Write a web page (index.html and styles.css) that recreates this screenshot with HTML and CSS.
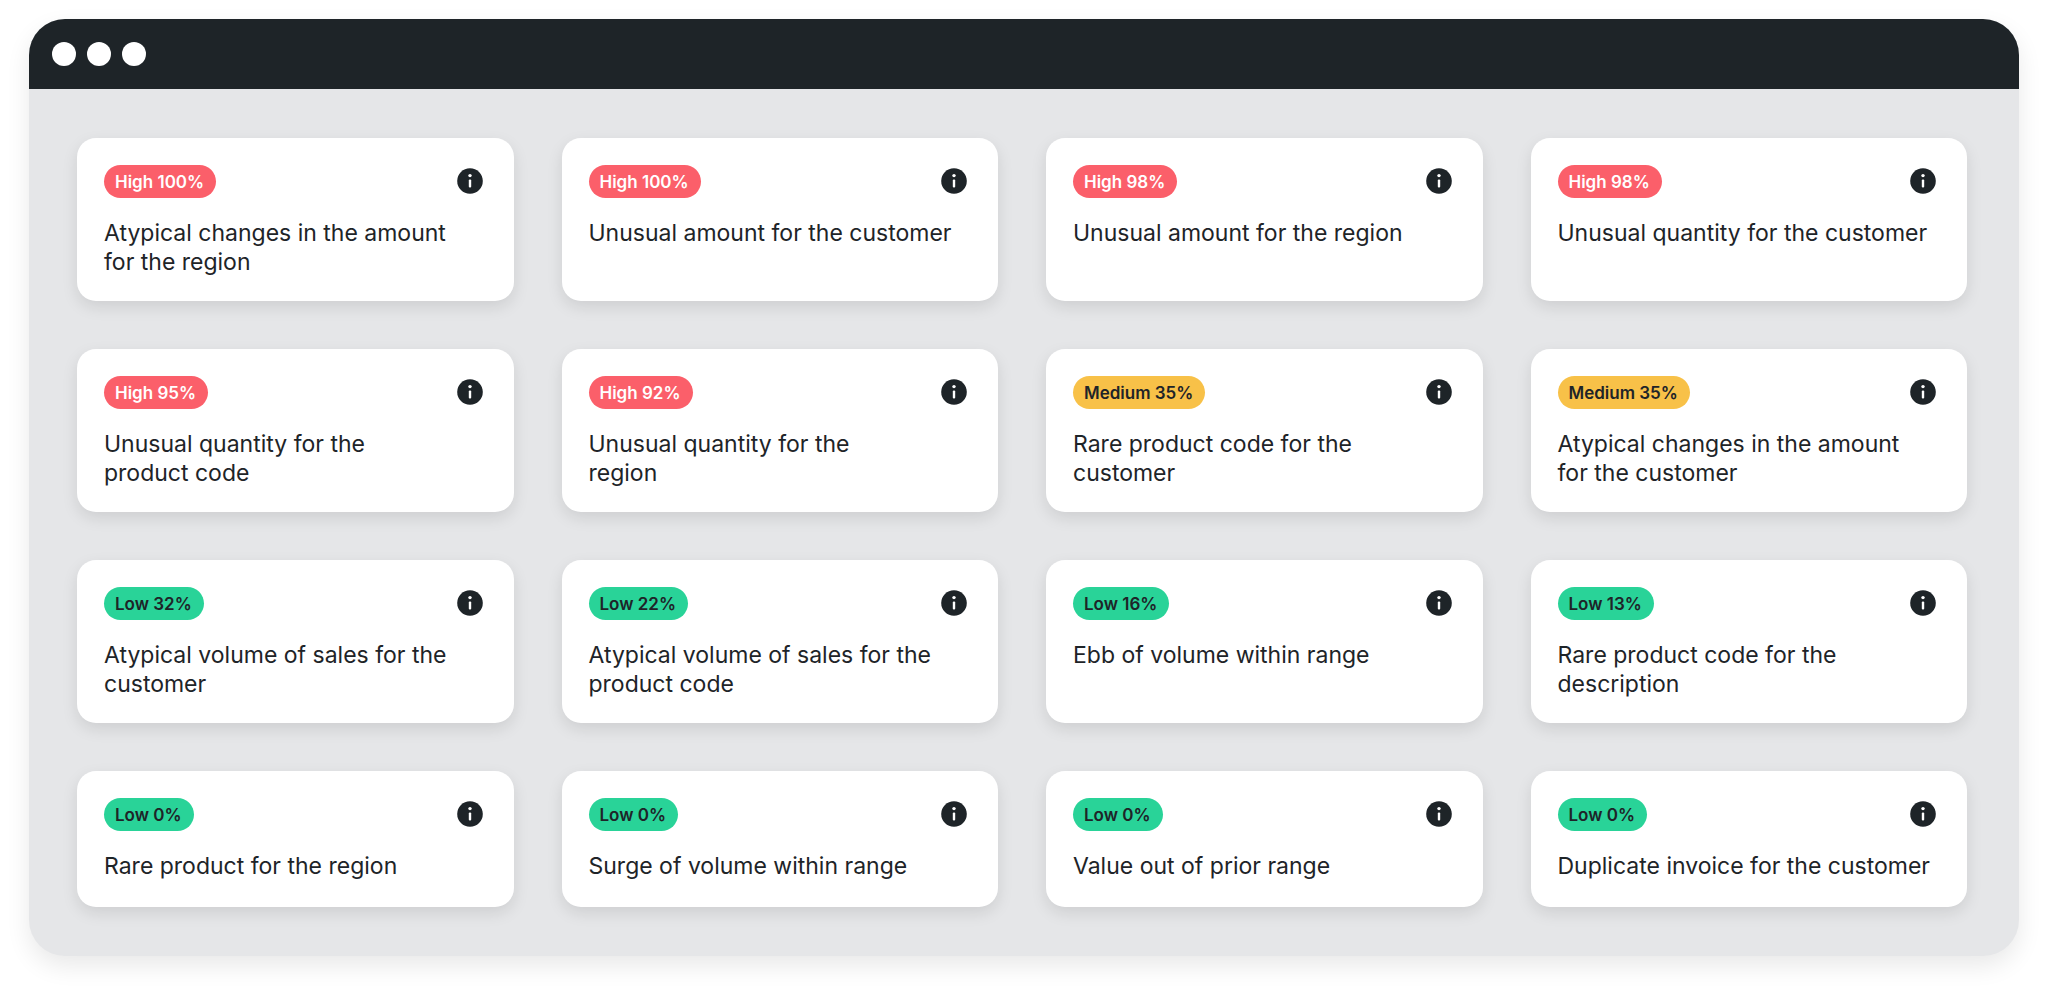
FILE: index.html
```
<!DOCTYPE html>
<html lang="en">
<head>
    <meta charset="UTF-8">
    <meta name="viewport" content="width=device-width, initial-scale=1.0">
    <title>Risk Factors</title>
    <link rel="stylesheet" href="styles.css">
</head>
<body>
    <!-- shared info icon -->
    <svg class="sprite" aria-hidden="true">
        <symbol id="info" viewBox="0 0 26 26">
            <circle cx="13" cy="13" r="12.8" fill="#1e2428" />
            <circle cx="13" cy="7.6" r="1.7" fill="#fff" />
            <rect x="11.8" y="11.6" width="2.4" height="8" rx="1" fill="#fff" />
        </symbol>
    </svg>

    <div class="window">
        <header class="title-bar">
            <span class="dot"></span>
            <span class="dot"></span>
            <span class="dot"></span>
        </header>

        <main class="cards">
            <article class="card">
                <div class="card-top">
                    <span class="badge high">High 100%</span>
                    <button class="info" aria-label="More info"><svg><use href="#info" /></svg></button>
                </div>
                <p>Atypical changes in the amount<br>for the region</p>
            </article>
            <article class="card">
                <div class="card-top">
                    <span class="badge high">High 100%</span>
                    <button class="info" aria-label="More info"><svg><use href="#info" /></svg></button>
                </div>
                <p>Unusual amount for the customer</p>
            </article>
            <article class="card">
                <div class="card-top">
                    <span class="badge high">High 98%</span>
                    <button class="info" aria-label="More info"><svg><use href="#info" /></svg></button>
                </div>
                <p>Unusual amount for the region</p>
            </article>
            <article class="card">
                <div class="card-top">
                    <span class="badge high">High 98%</span>
                    <button class="info" aria-label="More info"><svg><use href="#info" /></svg></button>
                </div>
                <p>Unusual quantity for the customer</p>
            </article>

            <article class="card">
                <div class="card-top">
                    <span class="badge high">High 95%</span>
                    <button class="info" aria-label="More info"><svg><use href="#info" /></svg></button>
                </div>
                <p>Unusual quantity for the<br>product code</p>
            </article>
            <article class="card">
                <div class="card-top">
                    <span class="badge high">High 92%</span>
                    <button class="info" aria-label="More info"><svg><use href="#info" /></svg></button>
                </div>
                <p>Unusual quantity for the<br>region</p>
            </article>
            <article class="card">
                <div class="card-top">
                    <span class="badge medium">Medium 35%</span>
                    <button class="info" aria-label="More info"><svg><use href="#info" /></svg></button>
                </div>
                <p>Rare product code for the<br>customer</p>
            </article>
            <article class="card">
                <div class="card-top">
                    <span class="badge medium">Medium 35%</span>
                    <button class="info" aria-label="More info"><svg><use href="#info" /></svg></button>
                </div>
                <p>Atypical changes in the amount<br>for the customer</p>
            </article>

            <article class="card">
                <div class="card-top">
                    <span class="badge low">Low 32%</span>
                    <button class="info" aria-label="More info"><svg><use href="#info" /></svg></button>
                </div>
                <p>Atypical volume of sales for the<br>customer</p>
            </article>
            <article class="card">
                <div class="card-top">
                    <span class="badge low">Low 22%</span>
                    <button class="info" aria-label="More info"><svg><use href="#info" /></svg></button>
                </div>
                <p>Atypical volume of sales for the<br>product code</p>
            </article>
            <article class="card">
                <div class="card-top">
                    <span class="badge low">Low 16%</span>
                    <button class="info" aria-label="More info"><svg><use href="#info" /></svg></button>
                </div>
                <p>Ebb of volume within range</p>
            </article>
            <article class="card">
                <div class="card-top">
                    <span class="badge low">Low 13%</span>
                    <button class="info" aria-label="More info"><svg><use href="#info" /></svg></button>
                </div>
                <p>Rare product code for the<br>description</p>
            </article>

            <article class="card">
                <div class="card-top">
                    <span class="badge low">Low 0%</span>
                    <button class="info" aria-label="More info"><svg><use href="#info" /></svg></button>
                </div>
                <p>Rare product for the region</p>
            </article>
            <article class="card">
                <div class="card-top">
                    <span class="badge low">Low 0%</span>
                    <button class="info" aria-label="More info"><svg><use href="#info" /></svg></button>
                </div>
                <p>Surge of volume within range</p>
            </article>
            <article class="card">
                <div class="card-top">
                    <span class="badge low">Low 0%</span>
                    <button class="info" aria-label="More info"><svg><use href="#info" /></svg></button>
                </div>
                <p>Value out of prior range</p>
            </article>
            <article class="card">
                <div class="card-top">
                    <span class="badge low">Low 0%</span>
                    <button class="info" aria-label="More info"><svg><use href="#info" /></svg></button>
                </div>
                <p>Duplicate invoice for the customer</p>
            </article>
        </main>
    </div>
</body>
</html>
```
FILE: styles.css
```
* {
    box-sizing: border-box;
}
body {
    margin: 0;
    padding: 19px 29px 39px;
    background-color: #fff;
    color: #1e2428;
    font-family: Inter, "Liberation Sans", sans-serif;
}
.sprite {
    display: none;
}
.window {
    background-color: #e5e6e8;
    border-radius: 36px;
    box-shadow: 0 10px 24px rgba(0, 0, 0, 0.09);
    overflow: hidden;
}
.title-bar {
    display: flex;
    align-items: center;
    gap: 11px;
    height: 70px;
    padding: 0 23px;
    background-color: #1e2428;
}
.dot {
    width: 24px;
    height: 24px;
    border-radius: 50%;
    background-color: #fff;
}
.cards {
    display: grid;
    grid-template-columns: repeat(4, 1fr);
    gap: 48px;
    padding: 49px 52px 49px 48px;
}
.card {
    min-height: 136px;
    padding: 27px 27px 24px;
    background-color: #fff;
    border-radius: 19px;
    box-shadow: 0 6px 16px rgba(0, 0, 0, 0.1);
}
.card-top {
    display: flex;
    justify-content: space-between;
    align-items: flex-start;
    margin-bottom: 21px;
}
.badge {
    height: 33px;
    padding: 0 12px 0 11px;
    border-radius: 17px;
    font-size: 17px;
    font-weight: 600;
    line-height: 34px;
}
.high {
    background-color: #fb5f6a;
    color: #fff;
}
.medium {
    background-color: #f8c148;
}
.low {
    background-color: #29d398;
}
.info {
    width: 26px;
    height: 26px;
    margin: 3px 4px 0 0;
    padding: 0;
    border: none;
    background: none;
    cursor: pointer;
}
.info svg {
    display: block;
    width: 26px;
    height: 26px;
}
.card p {
    margin: 0;
    font-size: 23px;
    line-height: 29px;
    white-space: nowrap;
}
```
